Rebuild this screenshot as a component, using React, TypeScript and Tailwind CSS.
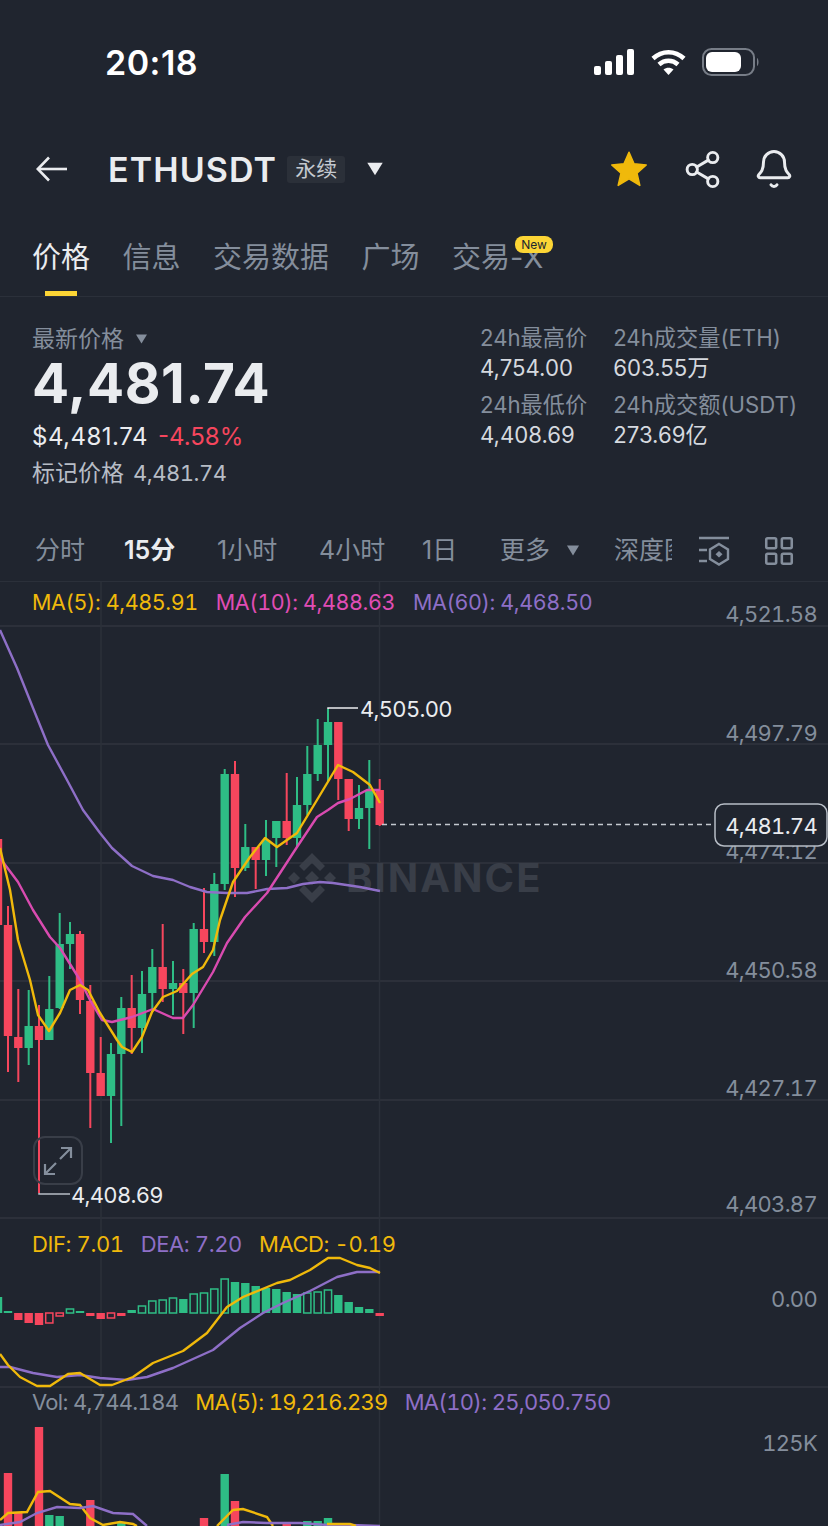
import { Bell, LayoutGrid, Share2 } from "lucide-react";

// x, wick top, wick bottom, body top, body bottom, up
type Candle = [number, number, number, number, number, boolean];

const candles: Candle[] = [
  [-2, 820, 925, 839, 925, false],
  [8, 906, 1072, 925, 1036, false],
  [18.3, 989, 1082, 1037, 1048, false],
  [28.7, 990, 1065, 1026, 1048, true],
  [39, 1005, 1193, 1026, 1040, false],
  [49.3, 976, 1040, 1009, 1040, true],
  [59.7, 913, 1009, 944, 1008, true],
  [70, 922, 969, 934, 944, true],
  [80, 931, 1014, 934, 1000, false],
  [90.3, 985, 1128, 1001, 1073, false],
  [100.7, 1037, 1096, 1073, 1096, false],
  [111, 1043, 1143, 1054, 1096, true],
  [121.3, 997, 1126, 1008, 1054, true],
  [131.7, 975, 1054, 1008, 1028, false],
  [142, 971, 1053, 994, 1028, true],
  [152.3, 949, 1010, 967, 993, true],
  [162.7, 924, 1002, 967, 989, false],
  [173, 961, 1015, 983, 989, true],
  [183.3, 969, 1034, 983, 993, false],
  [193.7, 923, 1028, 929, 993, true],
  [204, 888, 953, 929, 942, false],
  [214.3, 873, 956, 884, 942, true],
  [224.7, 769, 890, 774, 884, true],
  [235, 761, 897, 774, 868, false],
  [245.3, 824, 871, 847, 868, true],
  [255.7, 847, 889, 847, 860, false],
  [266, 820, 876, 840, 860, true],
  [276.3, 821, 867, 821, 838, true],
  [286.7, 773, 845, 821, 838, false],
  [297, 777, 846, 805, 838, true],
  [307.3, 746, 815, 774, 805, true],
  [317.7, 719, 781, 745, 774, true],
  [328, 709, 782, 722, 745, true],
  [338.3, 722, 800, 722, 779, false],
  [348.7, 779, 831, 779, 819, false],
  [359, 785, 829, 808, 819, true],
  [369.3, 760, 849, 790, 808, true],
  [379.7, 779, 826, 790, 825, false],
];

const ma5 = "0,848 10,890 18,940 30,980 38,1015 49,1031 60,1013 70,990 80,985 88,990 100,1013 117,1040 122,1047 132,1052 142,1037 152,1012 163,997 177,991 192,974 203,967 213,950 220,920 233,882 250,857 265,838 277,847 297,833 317,800 338,765 353,772 370,785 380,803";
const ma10 = "0,858 18,882 33,910 50,937 60,948 80,980 90,1000 102,1020 112,1022 132,1017 153,1009 173,1018 183,1018 193,1005 213,972 227,943 245,917 267,893 297,847 317,817 328,810 338,803 350,799 367,790 380,790";
const ma60 = "0,630 17,668 33,708 48,745 67,780 83,810 100,833 112,848 132,866 153,876 173,880 190,887 207,892 227,893 247,893 267,889 287,888 303,884 320,882 333,883 360,887 380,891";

// x, bar top, rising, hollow
const macdBars: [number, number, boolean, boolean][] = [
  [-2, 1297, true, false],
  [8, 1311, true, false],
  [18.3, 1320, false, false],
  [28.7, 1323, false, false],
  [39, 1325, false, false],
  [49.3, 1323, false, true],
  [59.7, 1316, false, true],
  [70, 1309, true, true],
  [80, 1311, true, false],
  [90.3, 1316, false, false],
  [100.7, 1319, false, false],
  [111, 1318, false, true],
  [121.3, 1316, false, false],
  [131.7, 1310, true, false],
  [142, 1306, true, true],
  [152.3, 1301, true, true],
  [162.7, 1300, true, true],
  [173, 1298, true, true],
  [183.3, 1299, true, false],
  [193.7, 1294, true, true],
  [204, 1293, true, true],
  [214.3, 1289, true, true],
  [224.7, 1279, true, true],
  [235, 1282, true, false],
  [245.3, 1283, true, false],
  [255.7, 1286, true, false],
  [266, 1288, true, false],
  [276.3, 1289, true, false],
  [286.7, 1292, true, false],
  [297, 1294, true, false],
  [307.3, 1293, true, true],
  [317.7, 1292, true, true],
  [328, 1290, true, true],
  [338.3, 1295, true, false],
  [348.7, 1302, true, false],
  [359, 1307, true, false],
  [369.3, 1309, true, false],
  [379.7, 1316, false, false],
];

const dif = "0,1354 8,1365 20,1377 37,1386 50,1386 68,1374 80,1373 100,1385 112,1385 133,1377 153,1363 183,1351 207,1333 227,1307 243,1297 277,1283 290,1280 310,1270 328,1258 340,1258 357,1265 370,1268 380,1273";
const dea = "0,1367 10,1367 33,1373 57,1377 80,1375 100,1378 127,1380 147,1377 173,1368 213,1350 240,1328 263,1313 283,1303 310,1291 337,1277 357,1272 380,1272";

const volBars: [number, number, boolean][] = [
  [8, 1473, false],
  [18.3, 1513, false],
  [39, 1427, false],
  [49.3, 1515, true],
  [59.7, 1516, true],
  [90.3, 1500, false],
  [121.3, 1523, true],
  [204, 1518, false],
  [224.7, 1474, true],
  [235, 1501, false],
  [286.7, 1523, false],
  [307.3, 1521, true],
  [317.7, 1521, true],
  [328, 1518, true],
];

const axis = [
  { y: 622, label: "4,521.58" },
  { y: 741, label: "4,497.79" },
  { y: 859, label: "4,474.12" },
  { y: 978, label: "4,450.58" },
  { y: 1096, label: "4,427.17" },
  { y: 1212, label: "4,403.87" },
  { y: 1307, label: "0.00" },
  { y: 1451, label: "125K" },
];

const GREEN = "#2ebd85";
const RED = "#f6465d";
const BG = "#20252f";

function Chart() {
  return (
    <svg
      viewBox="0 582 828 944"
      className="absolute inset-0 h-[944px] w-[828px] font-['Inter',sans-serif] tabular-nums"
    >
      {[626, 744, 863, 981, 1100, 1218, 1387].map((y) => (
        <line key={y} x1="0" x2="828" y1={y} y2={y} stroke="#30353f" strokeWidth="1.5" />
      ))}
      <line x1="101" x2="101" y1="582" y2="1526" stroke="#2b303a" strokeWidth="1.5" />
      <line x1="379.5" x2="379.5" y1="582" y2="1526" stroke="#2b303a" strokeWidth="1.5" />

      {/* watermark */}
      <g fill="#393e48">
        <polygon points="312,853 325,866 320,871 312,863 304,871 299,866" />
        <polygon points="312,903 325,890 320,885 312,893 304,885 299,890" />
        <polygon points="288,878 294,872 300,878 294,884" />
        <polygon points="324,878 330,872 336,878 330,884" />
        <polygon points="312,871 319,878 312,885 305,878" />
      </g>
      <text x="346" y="892" fill="#393e48" fontSize="40" fontWeight="700" letterSpacing="2">
        BINANCE
      </text>

      {candles.map(([x, wt, wb, bt, bb, up]) => (
        <g key={x} fill={up ? GREEN : RED}>
          <rect x={x - 1} y={wt} width="2" height={wb - wt} />
          <rect x={x - 4.2} y={bt} width="8.4" height={bb - bt} />
        </g>
      ))}

      <polyline points={ma60} fill="none" stroke="#8e6fc7" strokeWidth="2.4" strokeLinejoin="round" />
      <polyline points={ma10} fill="none" stroke="#d94bb0" strokeWidth="2.4" strokeLinejoin="round" />
      <polyline points={ma5} fill="none" stroke="#f0b90b" strokeWidth="2.4" strokeLinejoin="round" />

      {/* high and low markers */}
      <polyline points="328,709 328,708 358,708" fill="none" stroke="#eaecef" strokeWidth="1.5" />
      <text x="360" y="717" fill="#eaecef" fontSize="22" letterSpacing="-0.7">4,505.00</text>
      <polyline points="39,1193 39,1194 70,1194" fill="none" stroke="#b7bdc6" strokeWidth="1.5" />
      <text x="71" y="1203" fill="#eaecef" fontSize="22" letterSpacing="-0.7">4,408.69</text>

      {/* current price */}
      <line x1="382" x2="715" y1="824.5" y2="824.5" stroke="#c4c9d0" strokeWidth="1.5" strokeDasharray="5 4" />

      {axis.map((a) => (
        <text key={a.label} x="817" y={a.y} textAnchor="end" fill="#848e9c" fontSize="22" letterSpacing="-0.7">
          {a.label}
        </text>
      ))}

      <rect x="715" y="804" width="112" height="42" rx="9" fill={BG} stroke="#b7bdc6" strokeWidth="1.5" />
      <text x="817" y="834" textAnchor="end" fill="#eaecef" fontSize="22" letterSpacing="-0.7">4,481.74</text>

      {/* MACD */}
      {macdBars.map(([x, top, up, hollow]) => {
        const y = Math.min(top, 1313);
        const h = Math.abs(top - 1313);
        const color = up ? GREEN : RED;
        return hollow ? (
          <rect key={x} x={x - 3.6} y={y} width="7.2" height={h} fill="none" stroke={color} strokeWidth="1.5" />
        ) : (
          <rect key={x} x={x - 4.2} y={y} width="8.4" height={h} fill={color} />
        );
      })}
      <polyline points={dea} fill="none" stroke="#8e6fc7" strokeWidth="2.4" strokeLinejoin="round" />
      <polyline points={dif} fill="none" stroke="#f0b90b" strokeWidth="2.4" strokeLinejoin="round" />

      {/* volume */}
      {volBars.map(([x, top, up]) => (
        <rect key={x} x={x - 4.2} y={top} width="8.4" height={1526 - top} fill={up ? GREEN : RED} />
      ))}
      <polyline
        points="0,1520 8,1513 27,1512 38,1492 50,1491 70,1504 80,1505 90,1518 103,1525 120,1522 133,1524 137,1526"
        fill="none"
        stroke="#f0b90b"
        strokeWidth="2.4"
      />
      <polyline
        points="0,1525 20,1522 37,1513 57,1507 80,1508 93,1506 113,1513 133,1514 147,1526"
        fill="none"
        stroke="#8e6fc7"
        strokeWidth="2.4"
      />
      <polyline
        points="217,1526 233,1510 243,1509 267,1517 273,1526"
        fill="none"
        stroke="#f0b90b"
        strokeWidth="2.4"
      />
      <polyline
        points="227,1525 243,1522 267,1523 300,1523 327,1525 350,1525 380,1526"
        fill="none"
        stroke="#8e6fc7"
        strokeWidth="2.4"
      />
      <polyline points="327,1524 350,1524 356,1526" fill="none" stroke="#f0b90b" strokeWidth="2.4" />
    </svg>
  );
}

function StatusIcons() {
  return (
    <div className="flex items-center gap-[16px]">
      <svg width="41" height="26" viewBox="0 0 41 26" fill="#fff">
        <rect x="0" y="17" width="7" height="9" rx="2" />
        <rect x="11" y="12" width="7" height="14" rx="2" />
        <rect x="22" y="6" width="7" height="20" rx="2" />
        <rect x="33" y="0" width="7" height="26" rx="2" />
      </svg>
      <svg width="35" height="27" viewBox="0 0 35 27" fill="none" stroke="#fff" strokeWidth="4.5">
        <path d="M2 9.5 C11 1 24 1 33 9.5" />
        <path d="M8 15.5 C13.5 10.5 21.5 10.5 27 15.5" />
        <path d="M17.5 26 L12.5 20.5 C15.5 18 19.5 18 22.5 20.5 Z" fill="#fff" stroke="none" />
      </svg>
      <svg width="58" height="28" viewBox="0 0 58 28" fill="none">
        <rect x="1" y="1" width="51" height="26" rx="8.5" stroke="#777d87" strokeWidth="2" />
        <rect x="4" y="4" width="35" height="20" rx="6" fill="#fff" />
        <path d="M55 10 C57 11 57 17 55 18 Z" fill="#777d87" />
      </svg>
    </div>
  );
}

function Arrow() {
  return (
    <svg width="32" height="26" viewBox="0 0 32 26" fill="none" stroke="#eaecef" strokeWidth="2.6">
      <path d="M31 13 H2" />
      <path d="M13 1.5 L1.8 13 L13 24.5" />
    </svg>
  );
}

function Star() {
  return (
    <svg width="38" height="36" viewBox="0 0 24 23" fill="#f0b90b">
      <path
        d="M12 .8 15.2 8.2 23 8.9 17.1 14.1 18.9 22 12 17.8 5.1 22 6.9 14.1 1 8.9 8.8 8.2Z"
        stroke="#f0b90b"
        strokeLinejoin="round"
      />
    </svg>
  );
}

function Caret({ className }: { className: string }) {
  return (
    <svg viewBox="0 0 12 10" className={className} fill="currentColor">
      <path d="M0.5 0.5 H11.5 L6 9.5 Z" />
    </svg>
  );
}

function Expand() {
  return (
    <svg width="30" height="30" viewBox="0 0 30 30" fill="none" stroke="#848e9c" strokeWidth="2.2">
      <path d="M17 13 L28 2 M18 2 H28 V12" />
      <path d="M13 17 L2 28 M2 18 V28 H12" />
    </svg>
  );
}

function KlineSetting() {
  return (
    <svg width="32" height="30" viewBox="0 0 32 30" fill="none" stroke="#848e9c" strokeWidth="2.4">
      <path d="M1 2 H31 M1 14 H9 M1 25 H9" />
      <path d="M21 8 L30 13.5 V23 L21 28.5 L12 23 V13.5 Z" />
      <path d="M21 15 L24.5 18.2 L21 21.5 L17.5 18.2 Z" fill="#848e9c" stroke="none" />
    </svg>
  );
}

const tabs = ["价格", "信息", "交易数据", "广场", "交易-X"];
const intervals = [
  { label: "分时", w: "w-[89px]" },
  { label: "15分", w: "w-[93px]" },
  { label: "1小时", w: "w-[102px]" },
  { label: "4小时", w: "w-[103px]" },
  { label: "1日", w: "w-[78px]" },
];

export default function App() {
  return (
    <div className="flex h-[1526px] w-[828px] flex-col overflow-hidden bg-[#20252f] font-['Inter','Noto_Sans_CJK_SC',sans-serif] text-[#eaecef]">
      {/* status bar */}
      <div className="flex h-[124px] items-center justify-between pl-[105px] pr-[68px]">
        <span className="text-[34px] font-semibold tracking-[0.5px] text-white">20:18</span>
        <StatusIcons />
      </div>

      {/* header */}
      <div className="flex h-[90px] items-center pl-[36px] pr-[33px]">
        <Arrow />
        <span className="ml-[40px] text-[34px] font-semibold tracking-[1.1px]">ETHUSDT</span>
        <span className="ml-[10px] flex h-[27px] w-[58px] items-center justify-center rounded-[3px] bg-[#2b3039] text-[21px] text-[#c4c9d0]">
          永续
        </span>
        <Caret className="ml-[20px] h-[14px] w-[20px] text-[#eaecef]" />
        <div className="ml-auto flex items-center gap-[30px]">
          <span className="mr-[4px] flex">
            <Star />
          </span>
          <Share2 size={41} strokeWidth={1.7} />
          <Bell size={42} strokeWidth={1.7} />
        </div>
      </div>

      {/* tabs */}
      <div className="flex h-[83px] items-start gap-[32.5px] border-b border-[#2b303a] pl-[32px] pt-[28px]">
        {tabs.map((t, i) => (
          <div key={t} className="relative">
            <span className={`text-[29px] leading-[32px] ${i === 0 ? "text-[#eaecef]" : "text-[#848e9c]"}`}>
              {t}
            </span>
            {i === 0 && (
              <div className="absolute left-[13px] top-[49px] h-[5px] w-[32px] bg-[#fcd535]" />
            )}
            {i === 4 && (
              <span className="absolute left-[63px] top-[-6px] flex h-[17px] w-[38px] items-center justify-center rounded-[8px] bg-[#fcd535] text-[12px] text-[#202630]">
                New
              </span>
            )}
          </div>
        ))}
      </div>

      {/* price summary */}
      <div className="flex h-[215px] justify-between pl-[32px] pt-[26px]">
        <div>
          <div className="flex h-[32px] items-center text-[23px] text-[#848e9c]">
            最新价格
            <Caret className="ml-[10px] h-[10px] w-[15px]" />
          </div>
          <div className="mt-[-2px] text-[55px] font-bold leading-[60px] tracking-[0.6px]">4,481.74</div>
          <div className="mt-[9px] flex h-[30px] items-center text-[24px]">
            <span className="tracking-[0.5px]">$4,481.74</span>
            <span className="ml-[10px] text-[#f6465d]">-4.58%</span>
          </div>
          <div className="mt-[6px] flex h-[30px] items-center text-[23px] text-[#b7bdc6]">
            标记价格
            <span className="ml-[9px] text-[22px] tabular-nums tracking-[-0.5px]">4,481.74</span>
          </div>
        </div>
        <div className="flex gap-[26px] pr-[31px] text-[22.2px] leading-[30px]">
          <div>
            <div className="text-[#848e9c]">24h最高价</div>
            <div className="text-[#d5d9df]">4,754.00</div>
            <div className="mt-[7px] text-[#848e9c]">24h最低价</div>
            <div className="text-[#d5d9df]">4,408.69</div>
          </div>
          <div>
            <div className="text-[#848e9c]">24h成交量(ETH)</div>
            <div className="text-[#d5d9df]">603.55万</div>
            <div className="mt-[7px] text-[#848e9c]">24h成交额(USDT)</div>
            <div className="text-[#d5d9df]">273.69亿</div>
          </div>
        </div>
      </div>

      {/* interval row */}
      <div className="flex h-[70px] items-center border-b border-[#2b303a] pl-[35px] pt-[8px] text-[25px] text-[#848e9c]">
        {intervals.map((iv, i) => (
          <span key={iv.label} className={`${iv.w} shrink-0 ${i === 1 ? "font-semibold text-[#eaecef]" : ""}`}>
            {iv.label}
          </span>
        ))}
        <span className="flex w-[114px] shrink-0 items-center">
          更多
          <Caret className="ml-[15px] h-[11px] w-[16px]" />
        </span>
        <span className="w-[58px] shrink-0 overflow-hidden whitespace-nowrap">深度图</span>
        <div className="ml-[26px] flex items-center gap-[32px]">
          <KlineSetting />
          <LayoutGrid size={34} strokeWidth={1.8} />
        </div>
      </div>

      {/* chart */}
      <div className="relative flex-1">
        <Chart />
        <div className="absolute left-[32px] top-[5px] flex gap-[18px] text-[21.5px] leading-[30px] tabular-nums tracking-[-0.4px]">
          <span className="text-[#f0b90b]">MA(5): 4,485.91</span>
          <span className="text-[#e04db5]">MA(10): 4,488.63</span>
          <span className="text-[#8e6fc7]">MA(60): 4,468.50</span>
        </div>
        <div className="absolute left-[33px] top-[554px] flex h-[49px] w-[50px] items-center justify-center rounded-[12px] border-2 border-[#393e48]">
          <Expand />
        </div>
        <div className="absolute left-[32px] top-[647px] flex gap-[17px] text-[22px] leading-[30px] tabular-nums tracking-[-0.4px]">
          <span className="text-[#f0b90b]">DIF: 7.01</span>
          <span className="text-[#8e6fc7]">DEA: 7.20</span>
          <span className="text-[#f0b90b]">MACD: -0.19</span>
        </div>
        <div className="absolute left-[32px] top-[805px] flex gap-[17px] text-[22px] leading-[30px] tabular-nums tracking-[-0.7px]">
          <span className="text-[#848e9c]">Vol: 4,744.184</span>
          <span className="text-[#f0b90b]">MA(5): 19,216.239</span>
          <span className="text-[#8e6fc7]">MA(10): 25,050.750</span>
        </div>
      </div>
    </div>
  );
}
